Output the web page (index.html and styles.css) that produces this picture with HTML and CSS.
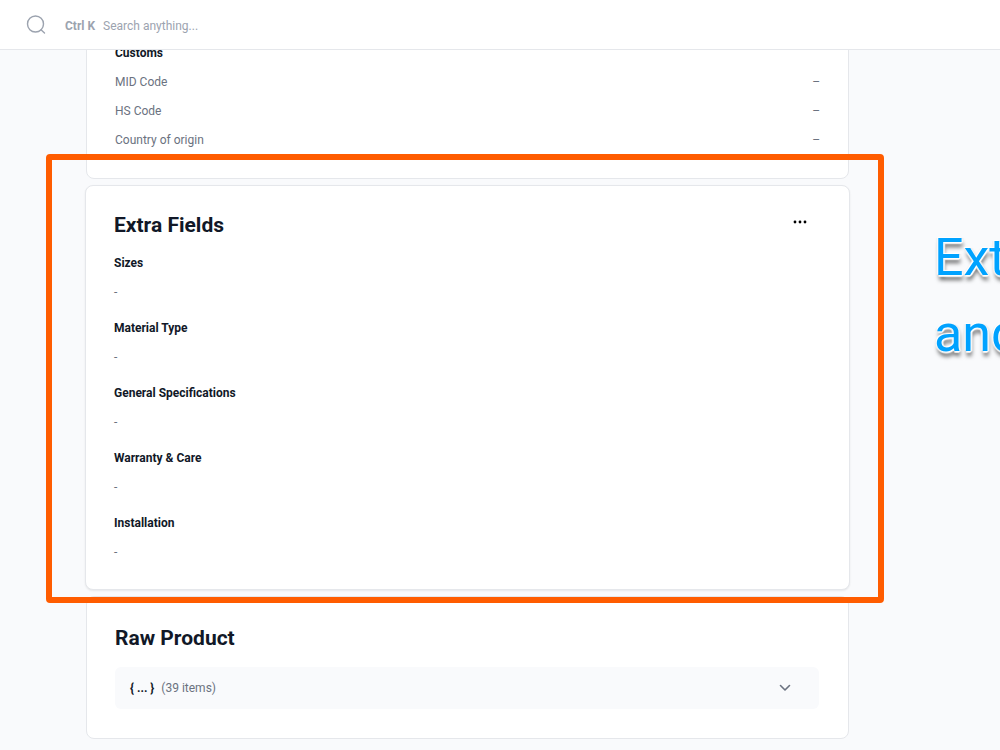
FILE: index.html
```html
<!DOCTYPE html>
<html lang="en">
<head>
  <meta charset="UTF-8">
  <title>Product</title>
  <meta name="viewport" content="width=device-width, initial-scale=1">
  <link rel="stylesheet" href="styles.css">
</head>
<body>

<header>
  <label class="search" for="search">
    <svg class="search-icon" viewBox="0 0 20 20" role="img" aria-label="Search">
      <circle cx="9.500" cy="9" r="8"/>
      <path d="M15 14.700L18.500 18"/>
    </svg>
    <kbd>Ctrl K</kbd>
  </label>
  <input type="search" id="search" placeholder="Search anything...">
</header>

<main>
  <div class="content">
    <!-- Customs -->
    <section class="card customs">
      <h3>Customs</h3>
      <dl>
        <div class="row"><dt>MID Code</dt><dd>–</dd></div>
        <div class="row"><dt>HS Code</dt><dd>–</dd></div>
        <div class="row"><dt>Country of origin</dt><dd>–</dd></div>
      </dl>
    </section>

    <!-- Extra Fields -->
    <section class="card extra">
      <div class="card-head">
        <h2>Extra Fields</h2>
        <button class="more-btn" type="button" aria-label="More actions">
          <svg viewBox="0 0 14 4"><circle cx="2" cy="2" r="1.400"/><circle cx="7" cy="2" r="1.400"/><circle cx="12" cy="2" r="1.400"/></svg>
        </button>
      </div>
      <dl class="fields">
        <div><dt>Sizes</dt><dd>-</dd></div>
        <div><dt>Material Type</dt><dd>-</dd></div>
        <div><dt>General Specifications</dt><dd>-</dd></div>
        <div><dt>Warranty &amp; Care</dt><dd>-</dd></div>
        <div><dt>Installation</dt><dd>-</dd></div>
      </dl>
      <div class="frame"></div>
    </section>

    <!-- Raw Product -->
    <section class="card raw">
      <h2>Raw Product</h2>
      <button class="json" type="button">
        <strong>{ ... }</strong>
        <span>(39 items)</span>
        <svg class="chevron" viewBox="0 0 12 8"><path d="M1.500 1.500L6 6L10.500 1.500"/></svg>
      </button>
    </section>
  </div>

  <aside class="note">Ext<br>and</aside>
</main>

</body>
</html>
```
FILE: styles.css
```css
* { box-sizing: border-box; }
body {
  margin: 0;
  font-family: Roboto, Arial, sans-serif;
  font-size: 12px;
  line-height: 16px;
  color: #111827;
  background: #f9fafc;
}
h2, h3, dl, dd { margin: 0; }
h2 {
  font-size: 21px;
  line-height: 28px;
  font-weight: 700;
}
h3 {
  font-size: 12px;
  font-weight: 700;
}
button {
  font: inherit;
  color: inherit;
  border: none;
  cursor: pointer;
}

header {
  position: sticky;
  top: 0;
  z-index: 10;
  display: flex;
  align-items: center;
  gap: 8px;
  height: 50px;
  padding: 0 26px;
  background: white;
  border-bottom: 1px solid #e5e7eb;
}
.search {
  display: flex;
  align-items: center;
  gap: 19px;
  color: #9ca3af;
}
.search-icon {
  width: 20px; height: 20px;
  fill: none;
  stroke: #9ca3af;
  stroke-width: 1.4;
  stroke-linecap: round;
}
kbd {
  font-family: inherit;
  font-size: 12px;
  font-weight: 700;
  padding-top: 2px;
}
#search {
  flex: 1;
  padding: 2px 0 0;
  border: none;
  outline: none;
  font: inherit;
  background: none;
}
#search::placeholder { color: #9ca3af; }

main {
  display: flex;
  overflow: hidden;
  padding-left: 86px;
}
.content {
  flex: 1;
  display: flex;
  flex-direction: column;
  gap: 6px;
  padding-bottom: 11px;
}
.card {
  padding: 28px;
  background: white;
  border: 1px solid #e5e7eb;
  border-radius: 8px;
}

/* scrolled partly under the header */
.customs {
  margin-top: -34px;
  padding-bottom: 30px;
}
.row {
  display: flex;
  justify-content: space-between;
  margin-top: 13px;
  color: #6b7280;
}

.extra {
  position: relative;
  margin: 0 -1px;
  padding: 25px 28px 29px;
  box-shadow: 0 1px 2px rgba(0,0,0,0.08);
}
.card-head {
  display: flex;
  justify-content: space-between;
}
.more-btn {
  display: flex;
  align-items: center;
  height: 22px;
  padding: 0 14px;
  background: none;
}
.more-btn svg { width: 14px; height: 4px; }
.fields {
  display: grid;
  gap: 20px;
  margin-top: 16px;
}
.fields dt { font-weight: 700; }
.fields dd {
  margin-top: 13px;
  color: #6b7280;
}
.frame {
  position: absolute;
  inset: -32px -35px -14px -40px;
  z-index: 2;
  border: 6px solid #ff5c00;
  border-radius: 4px;
  pointer-events: none;
}

.raw { padding: 27px 29px 29px 28px; }
.json {
  display: flex;
  align-items: center;
  gap: 7px;
  width: 100%;
  height: 42px;
  margin-top: 15px;
  padding: 0 28px 0 15px;
  border-radius: 6px;
  background: #f9fafc;
}
.json span { color: #6b7280; }
.chevron {
  width: 12px; height: 8px;
  margin-left: auto;
  fill: none;
  stroke: #6b7280;
  stroke-width: 1.6;
  stroke-linecap: round;
  stroke-linejoin: round;
}

.note {
  width: 151px;
  padding: 170px 0 0 85px;
  font-size: 52px;
  line-height: 76px;
  white-space: nowrap;
  color: #00a2ff;
  text-shadow: 1px 1px 1px white, -1px -1px 1px white, 2px 0 1px #eee, -2px 0 1px #eee, 0 2px 1px #eee, 1px 5px 4px rgba(0,0,0,0.6);
}
```
